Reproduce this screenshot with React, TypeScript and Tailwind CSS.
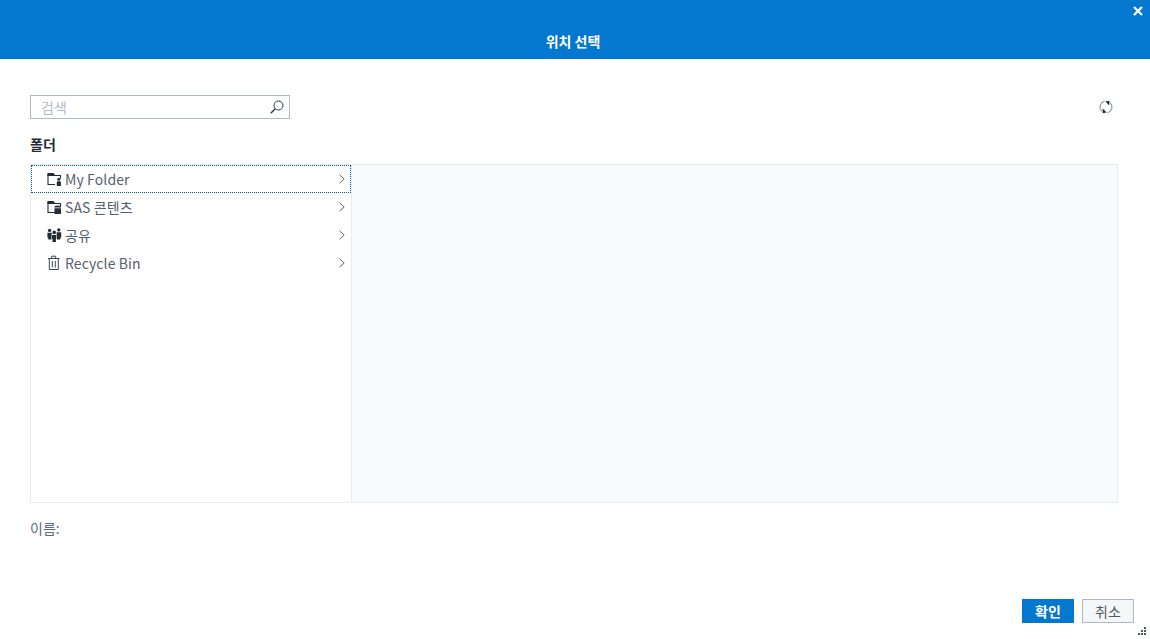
import React from "react";

function FolderBase() {
  return (
    <>
      <path d="M.5 2H6.2l1.6 1.6V5H.5z" fill="currentColor" />
      <path d="M1 3v10.5h7M7 4.5h6.5v3" fill="none" stroke="currentColor" strokeWidth="1.1" />
    </>
  );
}

function FolderUser() {
  return (
    <svg width="16" height="16" viewBox="0 0 16 16" className="shrink-0 text-[#232b38]">
      <FolderBase />
      <circle cx="11.8" cy="8.2" r="1.5" fill="currentColor" />
      <path d="M9.8 15v-3.6q0-1.2 1.2-1.2h1.7q1.2 0 1.2 1.2V15z" fill="currentColor" />
    </svg>
  );
}

function FolderDb() {
  return (
    <svg width="16" height="16" viewBox="0 0 16 16" className="shrink-0 text-[#232b38]">
      <FolderBase />
      <path d="M7.5 7.2q3.2-1.2 6.5 0v1.3H7.5zM7.5 9.2H14V15H7.5z" fill="currentColor" />
    </svg>
  );
}

function People() {
  return (
    <svg width="16" height="16" viewBox="0 0 16 16" className="shrink-0 text-[#232b38]" fill="currentColor">
      <circle cx="2.6" cy="3.4" r="1.7" />
      <circle cx="11.8" cy="2.9" r="1.7" />
      <circle cx="7.2" cy="5.4" r="1.8" />
      <path d="M.4 5.8h4.4v2.2H4.5V12.4H1.2V10.5H.4zM9.6 5.2h4.6v5.3h-.8V12.4H10V8H9.6zM5 8h4.4v3.8h-.5V15H5.5v-3.2H5z" />
    </svg>
  );
}

function Trash() {
  return (
    <svg width="16" height="16" viewBox="0 0 16 16" className="shrink-0 text-[#3a4352]" fill="none" stroke="currentColor" strokeWidth="1">
      <path d="M1 3.5h11.5M4.7 3.5V1.2h4v2.3M2.3 3.5v11h9v-11M5.3 6v6.5M8.3 6v6.5" />
    </svg>
  );
}

function Chevron() {
  return (
    <svg width="8" height="10" viewBox="0 0 8 10" fill="none" stroke="#5c6675" strokeWidth="1" className="shrink-0">
      <path d="M1.5 .8 6.2 5 1.5 9.2" />
    </svg>
  );
}

function Row({ icon, label, active }: { icon: React.ReactNode; label: string; active?: boolean }) {
  return (
    <div
      className={`h-7 flex items-center pl-[16px] pr-[5px] text-[14px] tracking-[0.1px] text-[#555f6d] ${
        active ? "outline-1 outline-dotted -outline-offset-1 outline-[#00609c]" : ""
      }`}
    >
      {icon}
      <span className="ml-[2px] flex-1 leading-7">{label}</span>
      <Chevron />
    </div>
  );
}

export default function App() {
  return (
    <div
      className="relative h-[639px] w-[1150px] overflow-hidden bg-white flex flex-col"
      style={{ fontFamily: '"Noto Sans CJK KR", "Noto Sans", sans-serif' }}
    >
      <header className="relative h-[59px] shrink-0 bg-[#0478ce] flex items-end justify-center pb-[8px] pr-[4px]">
        <h1 className="text-[14px] font-bold leading-5 text-white">위치 선택</h1>
        <svg width="10" height="10" viewBox="0 0 10 10" className="absolute right-[7px] top-[6px]" stroke="white" strokeWidth="2.2">
          <path d="M1 1 9 9M9 1 1 9" />
        </svg>
      </header>

      <div className="flex-1 flex flex-col px-[30px] pt-[36px] pr-[32px]">
        <div className="flex items-center justify-between h-[24px] pr-[4px]">
          <div className="h-[24px] w-[260px] border border-[#aeb7c6] flex items-center pl-[10px] pr-[4px]">
            <span className="flex-1 text-[14px] leading-5 text-[#b4bcc8]">검색</span>
            <svg width="16" height="16" viewBox="0 0 16 16" fill="none" stroke="#2b3442" strokeWidth="1">
              <circle cx="9.5" cy="6.5" r="4.5" />
              <path d="M6.2 9.8 1.8 14.2" strokeWidth="1.4" />
            </svg>
          </div>
          <svg width="16" height="16" viewBox="0 0 16 16" fill="none" stroke="#7a828e" strokeWidth="1">
            <path d="M6.5 2.2A6 6 0 0 0 4 12.5" />
            <path d="M9.5 13.8A6 6 0 0 0 12 3.5" />
            <path d="M7.4 2.4 11.4 1.8 11.2 6.4z" fill="#232b38" stroke="none" />
            <path d="M8.6 13.6 4.6 14.2 4.8 9.6z" fill="#232b38" stroke="none" />
          </svg>
        </div>

        <div className="mt-[15px] text-[14px] font-bold leading-5 text-[#252c38]">폴더</div>

        <div className="mt-[10px] h-[339px] w-[1088px] border border-[#e9ebee] flex">
          <div className="w-[320px] shrink-0 flex flex-col">
            <Row icon={<FolderUser />} label="My Folder" active />
            <Row icon={<FolderDb />} label="SAS 콘텐츠" />
            <Row icon={<People />} label="공유" />
            <Row icon={<Trash />} label="Recycle Bin" />
          </div>
          <div className="flex-1 bg-[#f9fafc] border-l border-[#e9ebee]" />
        </div>

        <div className="mt-[15px] text-[14px] leading-5 text-[#5f6b7c]">이름:</div>

        <div className="mt-[61px] flex justify-end gap-[8px] -mr-[16px]">
          <button className="h-[24px] w-[52px] bg-[#0478ce] text-[14px] font-bold leading-5 text-white">확인</button>
          <button className="h-[24px] w-[52px] border border-[#aeb7c6] bg-[#f5f6f8] text-[14px] leading-5 text-[#4f5967]">취소</button>
        </div>
      </div>

      <svg width="8" height="8" viewBox="0 0 8 8" fill="#4f5967" className="absolute right-[4px] bottom-[4px]">
        <rect x="6" y="0" width="2" height="2" />
        <rect x="3" y="3" width="2" height="2" />
        <rect x="6" y="3" width="2" height="2" />
        <rect x="0" y="6" width="2" height="2" />
        <rect x="3" y="6" width="2" height="2" />
        <rect x="6" y="6" width="2" height="2" />
      </svg>
    </div>
  );
}
